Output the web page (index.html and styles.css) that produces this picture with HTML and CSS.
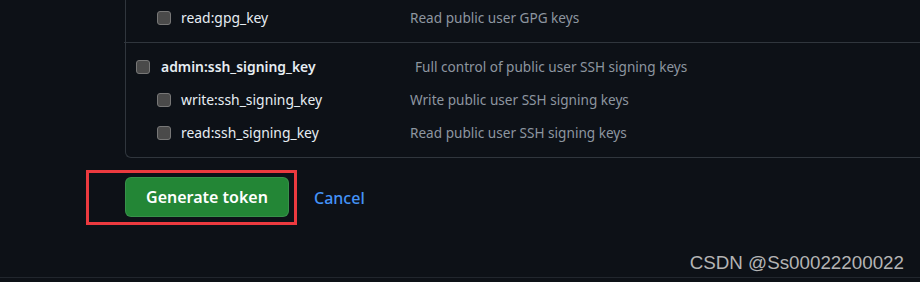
FILE: index.html
```html
<!DOCTYPE html>
<html lang="en">
<head>
    <meta charset="UTF-8">
    <meta name="viewport" content="width=device-width, initial-scale=1.0">
    <title>New personal access token</title>
    <link rel="stylesheet" href="styles.css">
</head>
<body>
    <div class="page">
        <div class="scopes">
            <div class="scope-group first">
                <label class="scope-row sub">
                    <input type="checkbox">
                    <span class="scope-name">read:gpg_key</span>
                    <span class="scope-desc">Read public user GPG keys</span>
                </label>
            </div>
            <div class="scope-group">
                <label class="scope-row">
                    <input type="checkbox">
                    <span class="scope-name">admin:ssh_signing_key</span>
                    <span class="scope-desc lead">Full control of public user SSH signing keys</span>
                </label>
                <label class="scope-row sub">
                    <input type="checkbox">
                    <span class="scope-name">write:ssh_signing_key</span>
                    <span class="scope-desc">Write public user SSH signing keys</span>
                </label>
                <label class="scope-row sub">
                    <input type="checkbox">
                    <span class="scope-name">read:ssh_signing_key</span>
                    <span class="scope-desc">Read public user SSH signing keys</span>
                </label>
            </div>
        </div>

        <div class="actions">
            <div class="highlight">
                <button type="submit" class="btn-primary">Generate token</button>
            </div>
            <a href="#" class="cancel">Cancel</a>
        </div>
    </div>
    <div class="watermark">CSDN @Ss00022200022</div>
</body>
</html>
```

FILE: styles.css
```css
body {
    margin: 0;
    padding: 0;
    background-color: #0d1117;
    font-family: "Noto Sans", "Open Sans", sans-serif;
    color: #e6edf3;
    width: 920px;
    height: 282px;
    overflow: hidden;
    position: relative;
}
.page {
    height: 278px;
    border-bottom: 1px solid #21262d;
    box-sizing: border-box;
}
.scopes {
    margin-left: 125px;
    border-left: 1px solid #30363d;
    border-bottom: 1px solid #30363d;
    border-bottom-left-radius: 6px;
}
.scope-group {
    padding: 7px 0 8px;
}
.scope-group.first {
    padding: 1px 0 8px 2px;
    border-bottom: 1px solid #30363d;
    margin-left: -2px;
}
.scope-row {
    display: flex;
    align-items: center;
    height: 33px;
    padding-left: 10px;
    font-size: 13.9px;
}
.scope-row.sub {
    padding-left: 31px;
}
.scope-row input {
    appearance: none;
    width: 14px;
    height: 14px;
    margin: 0 11px 0 0;
    background-color: #4a4a4a;
    border: 1px solid #777777;
    border-radius: 3px;
    box-sizing: border-box;
}
.scope-row.sub input {
    margin-right: 10px;
}
.scope-name {
    width: 249px;
    font-weight: 600;
}
.sub .scope-name {
    width: 229px;
    font-weight: 400;
}
.scope-desc {
    color: #8d96a0;
    font-size: 13.6px;
}
.scope-desc.lead {
    padding-left: 5px;
}
.actions {
    display: flex;
    align-items: center;
    margin-top: 12px;
}
.highlight {
    margin-left: 86px;
    border: 3px solid #ec3a3f;
    padding: 4px 5px 5px 36px;
}
.btn-primary {
    display: block;
    width: 164px;
    height: 40px;
    background-color: #238636;
    color: #ffffff;
    border: 1px solid rgba(240, 246, 252, 0.1);
    border-radius: 6px;
    font-family: inherit;
    font-size: 16px;
    font-weight: 600;
    cursor: pointer;
}
.cancel {
    margin-left: 17px;
    color: #4493f8;
    text-decoration: none;
    font-size: 16px;
    font-weight: 500;
}
.watermark {
    position: absolute;
    right: 16px;
    bottom: 8px;
    font-family: "Liberation Sans", Arial, sans-serif;
    font-size: 18.8px;
    color: #b4b4b4;
}
```
